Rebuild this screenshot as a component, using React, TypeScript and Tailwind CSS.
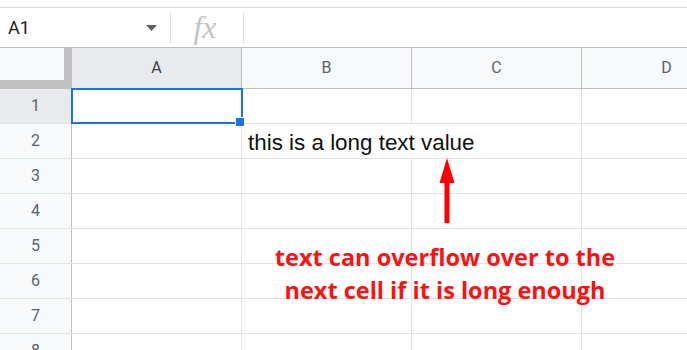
import React from 'react';

const COLS = ['A', 'B', 'C', 'D'];
const ROWS = [1, 2, 3, 4, 5, 6, 7, 8];

function Cell({ children, wide }: { children?: React.ReactNode; wide?: boolean }) {
  return (
    <div
      className={`${wide ? 'w-[340px]' : 'w-[170px]'} shrink-0 h-full border-r border-[#e2e3e3] flex items-center pl-[6px] whitespace-nowrap`}
    >
      {children}
    </div>
  );
}

export default function App() {
  return (
    <div className="relative w-[687px] h-[350px] overflow-hidden bg-white font-['Roboto','Liberation_Sans',sans-serif]">
      <div className="h-[7px]" />

      {/* formula bar */}
      <div className="h-[40px] border-t border-[#dadce0] flex items-center">
        <div className="w-[170px] shrink-0 h-full flex items-center justify-between pl-[8px] pr-[13px]">
          <span className="text-[18px] text-[#202124]">A1</span>
          <svg width="11" height="6" viewBox="0 0 11 6">
            <path d="M0 0 L11 0 L5.5 6 Z" fill="#5f6368" />
          </svg>
        </div>
        <div className="w-px h-[30px] bg-[#e0e0e0]" />
        <div className="w-[72px] shrink-0 flex justify-center">
          <span className="font-['Liberation_Serif',serif] italic text-[32px] leading-none text-[#c4c4c4] -ml-[4px] -mt-[2px]">fx</span>
        </div>
        <div className="w-px h-[30px] bg-[#e0e0e0]" />
      </div>

      {/* column headers */}
      <div className="h-[42px] border-y border-[#c0c0c0] flex">
        <div className="w-[72px] shrink-0 h-full bg-[#f8f9fa] border-r-[8px] border-b-[8px] border-[#c0c0c0]" />
        {COLS.map((c, i) => (
          <div
            key={c}
            className={`w-[170px] shrink-0 h-full border-r border-[#c0c0c0] flex items-center justify-center text-[16px] ${
              i === 0 ? 'bg-[#e8eaed] text-[#3c4043]' : 'bg-[#f8f9fa] text-[#5f6368]'
            }`}
          >
            {c}
          </div>
        ))}
      </div>

      {/* rows */}
      {ROWS.map((r) => (
        <div key={r} className="h-[35px] border-b border-[#e2e3e3] flex">
          <div
            className={`w-[72px] shrink-0 h-full border-r border-[#c0c0c0] flex items-center justify-center text-[16px] text-[#5f6368] ${
              r === 1 ? 'bg-[#e8eaed]' : 'bg-[#f8f9fa]'
            }`}
          >
            {r}
          </div>
          <Cell />
          {r === 2 ? (
            <Cell wide>
              <span className="font-['Liberation_Sans',Arial,sans-serif] text-[22.4px] text-[#111] pt-[3px]">
                this is a long text value
              </span>
            </Cell>
          ) : (
            <>
              <Cell />
              <Cell />
            </>
          )}
          <Cell />
        </div>
      ))}

      {/* selection A1 */}
      <div className="absolute left-[71px] top-[88px] w-[172px] h-[36px] border-2 border-[#1a73e8]" />
      <div className="absolute left-[235px] top-[117px] w-[10px] h-[10px] bg-[#1a73e8] border border-white" />

      {/* annotation */}
      <svg className="absolute left-[437px] top-[157px]" width="20" height="68" viewBox="0 0 20 68">
        <path d="M10 1 L17.5 26 L12.5 26 L12.5 66 L7.5 66 L7.5 26 L2.5 26 Z" fill="#ff0000" />
      </svg>
      <div className="absolute left-[245px] top-[241px] w-[400px] text-center font-['Open_Sans',sans-serif] font-bold text-[23.5px] leading-[33px] text-[#ff1111]">
        text can overflow over to the
        <br />
        next cell if it is long enough
      </div>
    </div>
  );
}
